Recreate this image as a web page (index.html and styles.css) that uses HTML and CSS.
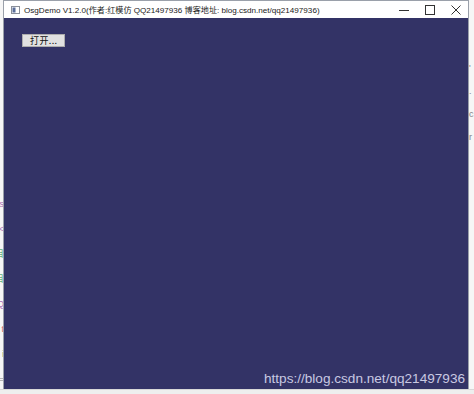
FILE: index.html
```html
<!DOCTYPE html>
<html>
<head>
<meta charset="utf-8">
<link rel="stylesheet" href="styles.css">
</head>
<body>
<div class="screen">
  <div class="side left-side">
    <span class="frag f-purple">s</span>
    <span class="frag f-purple">&lt;</span>
    <span class="frag f-green">目</span>
    <span class="frag f-green">目</span>
    <span class="frag f-purple">Q</span>
    <span class="frag f-red">t</span>
    <span class="frag f-green">i</span>
    <span class="frag f-dark">=</span>
  </div>
  <div class="window">
    <div class="titlebar">
      <svg class="app-icon" width="9" height="8" viewBox="0 0 9 8">
        <rect x="0.5" y="0.5" width="8" height="7" fill="#fff" stroke="#8a8f99"/>
        <rect x="1.5" y="1.5" width="3" height="5" fill="#5b6f9a"/>
      </svg>
      <span class="title">OsgDemo V1.2.0(作者:红模仿 QQ21497936 博客地址: blog.csdn.net/qq21497936)</span>
      <div class="controls">
        <svg width="10" height="10" viewBox="0 0 10 10"><path d="M0 5.5h10" stroke="#333" stroke-width="1"/></svg>
        <svg width="10" height="10" viewBox="0 0 10 10"><rect x="0.5" y="0.5" width="9" height="9" fill="none" stroke="#333"/></svg>
        <svg width="10" height="10" viewBox="0 0 10 10"><path d="M0.5 0.5l9 9M9.5 0.5l-9 9" stroke="#333" stroke-width="1"/></svg>
      </div>
    </div>
    <div class="client">
      <button class="open-btn">打开...</button>
      <div class="watermark">https://blog.csdn.net/qq21497936</div>
    </div>
  </div>
  <div class="side right-side">
    <span class="frag f-dark">'</span>
    <span class="frag f-dark">.</span>
    <span class="frag f-dark">c</span>
    <span class="frag f-dark">r</span>
  </div>
</div>
<div class="bottom-strip"></div>
</body>
</html>
```

FILE: styles.css
```css
html, body {
  margin: 0;
  padding: 0;
  width: 474px;
  height: 394px;
  overflow: hidden;
  background: #f3f3f3;
  font-family: "Liberation Sans", "Noto Sans CJK SC", sans-serif;
}

.screen {
  display: flex;
  height: 389px;
}

.side {
  display: flex;
  flex-direction: column;
  overflow: hidden;
  background: #f6f6f6;
  font-family: "Liberation Sans", "Noto Sans CJK SC", sans-serif;
  font-size: 9px;
  line-height: 9px;
}

.left-side {
  width: 3px;
  padding-top: 200px;
  gap: 16px;
  align-items: flex-end;
}

.right-side {
  width: 5px;
  padding-top: 64px;
  gap: 14px;
  align-items: flex-start;
}

.frag {
  display: block;
  opacity: 0.8;
}

.left-side .frag {
  margin-right: -1px;
}

.f-purple { color: #9b4fa8; }
.f-green { color: #3f9f5a; }
.f-red { color: #c44848; }
.f-dark { color: #6a6a6a; }

.window {
  width: 465px;
  display: flex;
  flex-direction: column;
  border: 1px solid #9aa0aa;
  border-bottom: none;
  background: #fff;
}

.titlebar {
  height: 17px;
  display: flex;
  align-items: center;
  background: #fff;
  padding-left: 7px;
}

.app-icon {
  flex: none;
  margin-right: 4px;
  margin-top: 1px;
}

.title {
  font-family: "Liberation Sans", "Noto Sans CJK SC", sans-serif;
  font-size: 8.1px;
  color: #1a1a1a;
  white-space: nowrap;
}

.controls {
  margin-left: auto;
  display: flex;
  align-items: center;
  gap: 16px;
  padding-right: 7px;
}

.controls svg {
  display: block;
}

.client {
  flex: 1;
  position: relative;
  background: #333366;
  padding: 16px 0 0 18px;
}

.open-btn {
  display: block;
  width: 43px;
  height: 13px;
  padding: 0 0 0 7px;
  margin: 0;
  text-align: left;
  font-family: "Noto Sans CJK SC", sans-serif;
  font-size: 9px;
  line-height: 11px;
  letter-spacing: 0.4px;
  color: #111;
  background: #e1e1e1;
  border: 1px solid #adadad;
  border-radius: 0;
}

.watermark {
  position: absolute;
  right: 3px;
  bottom: 3px;
  font-family: "Liberation Sans", sans-serif;
  font-size: 13.6px;
  color: #c9c9e2;
}

.bottom-strip {
  height: 5px;
  background: #eeeeee;
  border-top: 1px solid #d8d8d8;
}
```
